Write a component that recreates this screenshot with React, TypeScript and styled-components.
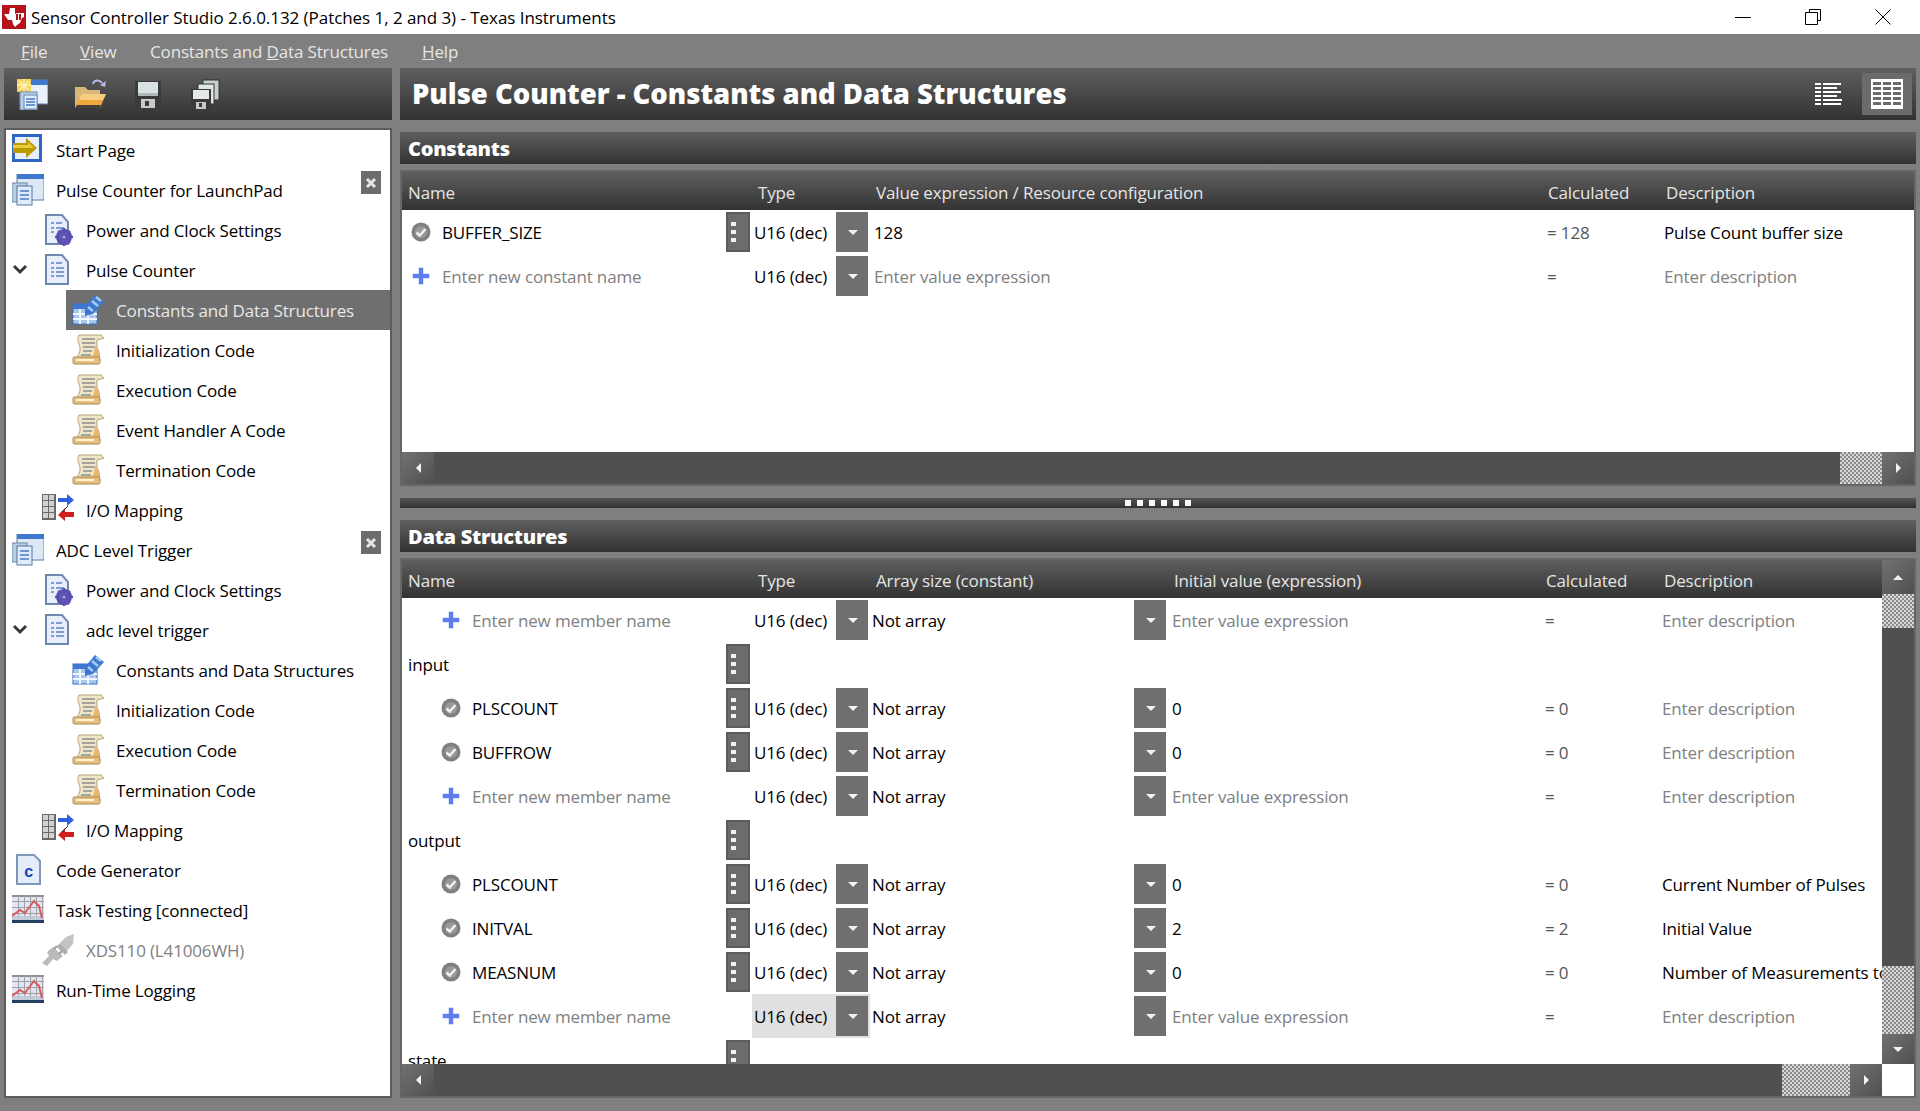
import type { ReactNode } from "react";
import styled, { createGlobalStyle } from "styled-components";

const GlobalStyle = createGlobalStyle`
  html, body { margin: 0; padding: 0; background: #7f7f7f; }
  * { box-sizing: border-box; }
  body { font-family: "Open Sans", "Noto Sans", sans-serif; overflow: hidden; }
`;

const FONT_SIZE = "17px";
const TRACKING = "-0.15px";
const HEAD_GRADIENT = "linear-gradient(#5f5f5f, #323232)";
const CHECKER = `repeating-conic-gradient(#d8d8d8 0 25%, #8a8a8a 0 50%) 0 0 / 4px 4px`;

const Shell = styled.div`
  width: 1920px;
  height: 1111px;
  display: flex;
  flex-direction: column;
  background: #7f7f7f;
  overflow: hidden;
`;

const TitleBar = styled.div`
  height: 34px;
  background: #fff;
  display: flex;
  align-items: center;
  padding-left: 2px;
  color: #000;
  font-size: 17px;
  letter-spacing: -0.05px;
  flex: none;
`;

const TitleText = styled.span`
  margin-left: 5px;
`;

const WindowControls = styled.div`
  margin-left: auto;
  display: flex;
  align-items: center;
  margin-right: 2px;
`;

const WindowButton = styled.div`
  width: 70px;
  height: 34px;
  display: flex;
  align-items: center;
  justify-content: center;
`;

const MenuBar = styled.div`
  height: 34px;
  flex: none;
  display: flex;
  align-items: center;
  padding-left: 21px;
  color: #e6e6e6;
  font-size: ${FONT_SIZE};
  letter-spacing: ${TRACKING};
`;

const MenuItem = styled.span<{ $width: number }>`
  width: ${(p) => p.$width}px;
  white-space: nowrap;
`;

const Body = styled.div`
  flex: 1;
  min-height: 0;
  display: flex;
  gap: 8px;
  padding: 0 4px 13px;
`;

const Sidebar = styled.div`
  width: 388px;
  display: flex;
  flex-direction: column;
  gap: 8px;
`;

const Toolbar = styled.div`
  height: 52px;
  flex: none;
  background: ${HEAD_GRADIENT};
  display: flex;
  align-items: center;
`;

const ToolButton = styled.div<{ $width: number }>`
  width: ${(p) => p.$width}px;
  padding-left: 12px;
  display: flex;
  align-items: center;
`;

const Tree = styled.div`
  flex: 1;
  border: 2px solid #5c5c5c;
  background: #fff;
  overflow: hidden;
`;

const TreeRow = styled.div`
  height: 40px;
  display: flex;
`;

const Gutter = styled.div<{ $width: number }>`
  width: ${(p) => p.$width}px;
  flex: none;
  display: flex;
  align-items: center;
`;

const ChevronSlot = styled.span`
  margin-left: 6px;
  display: flex;
`;

const TreeBody = styled.div<{ $selected?: boolean; $muted?: boolean }>`
  flex: 1;
  display: flex;
  align-items: center;
  padding-left: 6px;
  gap: 12px;
  font-size: ${FONT_SIZE};
  letter-spacing: ${TRACKING};
  white-space: nowrap;
  background: ${(p) => (p.$selected ? "#6f6f6f" : "transparent")};
  color: ${(p) => (p.$selected ? "#e8e8e8" : p.$muted ? "#808080" : "#000")};
`;

const CloseBox = styled.div`
  width: 20px;
  height: 23px;
  margin: 1px 9px 0 auto;
  align-self: flex-start;
  background: #6c6c6c;
  display: flex;
  align-items: center;
  justify-content: center;
`;

const Main = styled.div`
  flex: 1;
  min-width: 0;
  display: flex;
  flex-direction: column;
`;

const PageHeader = styled.div`
  height: 52px;
  flex: none;
  background: ${HEAD_GRADIENT};
  display: flex;
  align-items: center;
  padding-left: 12px;
  color: #fff;
  font-size: 27.5px;
  font-weight: 800;
  letter-spacing: -0.02px;
`;

const HeadingText = styled.span`
  margin-top: -2px;
`;

const ViewSwitch = styled.div`
  margin-left: auto;
  display: flex;
  align-items: center;
  padding-right: 4px;
`;

const ViewButton = styled.div<{ $active?: boolean }>`
  width: 50px;
  height: 42px;
  margin-left: 11px;
  display: flex;
  align-items: center;
  justify-content: center;
  background: ${(p) => (p.$active ? "#6b6b6b" : "transparent")};
`;

const SectionHeader = styled.div<{ $top: number }>`
  height: 32px;
  flex: none;
  margin-top: ${(p) => p.$top}px;
  background: ${HEAD_GRADIENT};
  display: flex;
  align-items: center;
  padding-left: 8px;
  padding-top: 1px;
  color: #fff;
  font-size: 20px;
  font-weight: 800;
  letter-spacing: -0.25px;
`;

const Panel = styled.div<{ $height?: number }>`
  margin-top: 6px;
  border: 2px solid #666;
  background: #fff;
  display: flex;
  flex-direction: column;
  overflow: hidden;
  ${(p) => (p.$height ? `height: ${p.$height}px; flex: none;` : "flex: 1; min-height: 0;")}
`;

const Splitter = styled.div`
  height: 10px;
  flex: none;
  margin: 12px 0;
  background: linear-gradient(#555, #303030);
  display: flex;
  justify-content: center;
  align-items: center;
  gap: 6px;
`;

const SplitDot = styled.span`
  width: 6px;
  height: 6px;
  background: #f8f8f8;
`;

const PanelMiddle = styled.div`
  flex: 1;
  min-height: 0;
  display: flex;
`;

const TableArea = styled.div`
  flex: 1;
  min-width: 0;
  display: flex;
  flex-direction: column;
  overflow: hidden;
`;

const HeaderRow = styled.div<{ $cols: string }>`
  height: 38px;
  flex: none;
  display: grid;
  grid-template-columns: ${(p) => p.$cols};
  align-items: center;
  padding-top: 2px;
  background: ${HEAD_GRADIENT};
  color: #e6e6e6;
  font-size: ${FONT_SIZE};
  letter-spacing: ${TRACKING};
  white-space: nowrap;
`;

const HeaderCell = styled.div<{ $col: number; $pad?: number }>`
  grid-column: ${(p) => p.$col};
  padding-left: ${(p) => p.$pad ?? 0}px;
`;

const Rows = styled.div`
  flex: 1;
  min-height: 0;
  overflow: hidden;
  padding-top: 2px;
  display: flex;
  flex-direction: column;
  gap: 4px;
`;

const Row = styled.div<{ $cols: string }>`
  height: 40px;
  flex: none;
  display: grid;
  grid-template-columns: ${(p) => p.$cols};
  align-items: center;
  font-size: ${FONT_SIZE};
  letter-spacing: ${TRACKING};
  white-space: nowrap;
  color: #000;
`;

const NameCell = styled.div<{ $indent: number; $ghost?: boolean }>`
  display: flex;
  align-items: center;
  padding-left: ${(p) => p.$indent}px;
  gap: 11px;
  color: ${(p) => (p.$ghost ? "#808080" : "#000")};
`;

const StatusSlot = styled.span`
  width: 20px;
  height: 20px;
  display: flex;
  align-items: center;
  justify-content: center;
`;

const GroupName = styled.div`
  padding-left: 6px;
`;

const Grip = styled.div`
  width: 24px;
  height: 40px;
  background: #6c6c6c;
  border: 2px solid #5c5c5c;
  display: flex;
  flex-direction: column;
  align-items: center;
  justify-content: center;
  gap: 4px;
  padding-right: 10px;
`;

const GripDot = styled.span`
  width: 5px;
  height: 4px;
  background: #f2f2f2;
`;

const TypeGroup = styled.div<{ $focused?: boolean }>`
  grid-column: 3 / span 2;
  display: flex;
  align-items: center;
  margin: -2px -2px -2px 2px;
  padding: 2px;
  background: ${(p) => (p.$focused ? "#e0e0e0" : "transparent")};
`;

const TypeText = styled.span`
  width: 82px;
`;

const DropButton = styled.div`
  width: 32px;
  height: 40px;
  padding-left: 1px;
  background: #6f6f6f;
  display: flex;
  align-items: center;
  justify-content: center;
`;

const Arrow = styled.span<{ $dir: "up" | "down" | "left" | "right" }>`
  width: 0;
  height: 0;
  border-style: solid;
  border-color: transparent;
  ${(p) =>
    p.$dir === "down"
      ? "border-width: 5px 5px 0; border-top-color: #f2f2f2;"
      : p.$dir === "up"
        ? "border-width: 0 5px 5px; border-bottom-color: #f2f2f2;"
        : p.$dir === "left"
          ? "border-width: 5px 5px 5px 0; border-right-color: #f2f2f2;"
          : "border-width: 5px 0 5px 5px; border-left-color: #f2f2f2;"}
`;

const Cell = styled.div<{ $pad?: number; $tone?: "ghost" | "calc" }>`
  padding-left: ${(p) => p.$pad ?? 0}px;
  overflow: hidden;
  color: ${(p) => (p.$tone === "ghost" ? "#808080" : p.$tone === "calc" ? "#555" : "#000")};
`;

const HScroll = styled.div`
  height: 32px;
  flex: none;
  display: flex;
  background: #505050;
`;

const ScrollButton = styled.div<{ $h?: number }>`
  width: 32px;
  height: ${(p) => p.$h ?? 32}px;
  flex: none;
  background: linear-gradient(135deg, #717171, #505050);
  display: flex;
  align-items: center;
  justify-content: center;
`;

const HThumb = styled.div<{ $width: number }>`
  width: ${(p) => p.$width}px;
  margin-left: auto;
  background: ${CHECKER};
`;

const Corner = styled.div`
  width: 32px;
  background: #fff;
`;

const VScroll = styled.div`
  width: 32px;
  flex: none;
  background: #505050;
  display: flex;
  flex-direction: column;
`;

const VThumb = styled.div<{ $height: number; $auto?: boolean }>`
  height: ${(p) => p.$height}px;
  flex: none;
  margin-top: ${(p) => (p.$auto ? "auto" : "0")};
  background: ${CHECKER};
`;

function Svg({ w = 32, h = 32, children }: { w?: number; h?: number; children: ReactNode }) {
  return (
    <svg width={w} height={h} viewBox={`0 0 ${w} ${h}`} style={{ flex: "none", display: "block" }}>
      {children}
    </svg>
  );
}

const TiLogo = () => (
  <Svg w={24} h={24}>
    <rect width="24" height="24" fill="#b5121b" />
    <path d="M8 3h5v6l2-1h7v4l-2 1-2 5-3 2-2 2-2-3-1-4H6L2 9h5z" fill="#fff" />
    <path d="M14 9h2v6h-2zM17 6h2v2h-2zM17 9h2v6h-2z" fill="#b5121b" />
  </Svg>
);

const NewProjectIcon = () => (
  <Svg>
    <rect x="4" y="2" width="28" height="24" fill="#e8f0fa" stroke="#5f7fae" />
    <rect x="4" y="2" width="28" height="5" fill="#3f79cf" />
    <rect x="1" y="1" width="14" height="13" fill="#f2d25c" />
    <path d="M8 1v13M1 7h14M3 3l10 9M13 3L3 12" stroke="#fff3b0" strokeWidth="1.4" />
    <rect x="4" y="14" width="17" height="18" fill="#b9cee9" stroke="#6d88ad" />
    <rect x="8" y="17" width="13" height="14" fill="#dfeafa" stroke="#6d88ad" />
    <path d="M10 21h9M10 24h9M10 27h9" stroke="#4a78c4" strokeWidth="1.5" />
  </Svg>
);

const OpenIcon = () => (
  <Svg>
    <path d="M19 6c1-4 6-5 9-1" fill="none" stroke="#b9b9e8" strokeWidth="2" />
    <path d="M32 3l-1 6-5-2z" fill="#b9b9e8" />
    <path d="M1 9h10l3 3h12v6H8L2 30H1z" fill="#d9b779" />
    <path d="M8 16h24l-6 14H1z" fill="#f0a83c" />
    <path d="M8 16h24l-3 6H5z" fill="#f7cd82" />
    <path d="M1 30h25l1-3H3z" fill="#45413a" />
  </Svg>
);

const SaveIcon = () => (
  <Svg w={28} h={28}>
    <rect x="1" y="1" width="26" height="27" fill="#3a3a3a" />
    <rect x="4" y="2" width="20" height="14" fill="#d9e2e2" />
    <rect x="4" y="13" width="20" height="3" fill="#aeb9b9" />
    <rect x="7" y="19" width="14" height="9" fill="#c8c8c8" />
    <rect x="11" y="21" width="4" height="5" fill="#3a3a3a" />
  </Svg>
);

const SaveAllIcon = () => (
  <Svg w={30} h={30}>
    <rect x="13" y="1" width="16" height="20" fill="#c8d0d0" stroke="#333" />
    <rect x="8" y="5" width="16" height="20" fill="#dfe6e6" stroke="#333" />
    <rect x="1" y="10" width="20" height="20" fill="#3a3a3a" />
    <rect x="3" y="11" width="16" height="9" fill="#e4eaea" />
    <rect x="6" y="23" width="10" height="7" fill="#c8c8c8" />
    <rect x="9" y="24" width="3" height="4" fill="#3a3a3a" />
  </Svg>
);

const ListViewIcon = () => (
  <Svg w={32} h={24}>
    {[2, 6, 10, 14, 18, 22].map((y, i) => (
      <g key={y} fill="#fff">
        <rect x="5" y={y - 1} width="6" height="2" />
        <rect x="13" y={y - 1} width={[18, 14, 18, 14, 19, 18][i]} height="2" />
      </g>
    ))}
  </Svg>
);

const TableViewIcon = () => (
  <Svg w={32} h={30}>
    <rect width="32" height="30" fill="#fff" />
    {[2, 7, 12, 17, 22].map((y) =>
      [2, 12, 22].map((x) => <rect key={`${x}-${y}`} x={x} y={y + 1} width="8" height="3" fill="#6b6b6b" />),
    )}
  </Svg>
);

const StartIcon = () => (
  <Svg>
    <rect x="0" y="0" width="30" height="28" fill="#2f66c4" />
    <rect x="3" y="3" width="24" height="22" fill="#e8eefa" />
    <path d="M1 9h13V4l11 10-11 10v-5H1z" fill="#b99a00" />
    <path d="M1 11h15V8l6 6H1z" fill="#e8cd3c" />
  </Svg>
);

const ProjectIcon = () => (
  <Svg>
    <rect x="5" y="0" width="27" height="26" fill="#dde8f7" stroke="#5f7fae" />
    <rect x="5" y="0" width="27" height="5" fill="#3f79cf" />
    <rect x="0" y="9" width="15" height="19" fill="#b9cee9" stroke="#6d88ad" />
    <rect x="5" y="12" width="15" height="19" fill="#dfeafa" stroke="#5a7498" />
    <path d="M8 17h9M8 21h9M8 25h9" stroke="#4a78c4" strokeWidth="1.5" />
  </Svg>
);

const DocIcon = () => (
  <Svg>
    <path d="M4 1h16l6 7v22H4z" fill="#e8effa" stroke="#6d88ad" strokeWidth="2" />
    <path d="M9 9h3M14 9h6M9 14h3M14 14h8M9 18h3M14 18h8M9 22h3M14 22h8" stroke="#5b82c8" strokeWidth="1.6" />
  </Svg>
);

const DocGearIcon = () => (
  <Svg>
    <path d="M4 1h16l6 7v22H4z" fill="#e8effa" stroke="#6d88ad" strokeWidth="2" />
    <path d="M9 9h3M14 9h6M9 14h3M14 14h8M9 18h3" stroke="#5b82c8" strokeWidth="1.6" />
    <circle cx="22" cy="23" r="6" fill="none" stroke="#5a4fb0" strokeWidth="4" />
    <path d="M22 14v18M13 23h18M16 17l12 12M28 17L16 29" stroke="#5a4fb0" strokeWidth="2.6" />
    <circle cx="22" cy="23" r="1.6" fill="#a9a4dc" />
  </Svg>
);

const ConstantsIcon = () => (
  <Svg>
    <rect x="1" y="10" width="24" height="20" fill="#a8c8ef" stroke="#3a70c0" />
    <rect x="1" y="10" width="24" height="5" fill="#3f79cf" />
    <path d="M8 15v15M16 15v15M1 20h24M1 25h24" stroke="#f2f7ff" strokeWidth="2" />
    <path d="M13 13L23 1l9 7-11 12-8 2z" fill="#3f79cf" />
    <path d="M20 7l6 5M24 3l5 4M16 13l5 4" stroke="#a9ccf6" strokeWidth="2.4" />
  </Svg>
);

const ScrollIcon = () => (
  <Svg>
    <path d="M7 1h22l3 3-7 2v8c2 3 3 6 2 10H4c4-4 5-9 3-14C6 7 5 4 7 1z" fill="#efe6c9" stroke="#b9a273" />
    <path d="M10 5h13M10 9h13M11 13h12M11 17h9M9 21h10" stroke="#a8a49a" strokeWidth="1.8" />
    <path d="M23 12c3 3 5 8 4 14h-9c3-4 5-9 5-14z" fill="#efb765" />
    <rect x="1" y="23" width="27" height="7" rx="1.5" fill="#e6be80" stroke="#a8864f" />
    <rect x="4" y="25" width="18" height="2" fill="#fff2d5" />
  </Svg>
);

const MappingIcon = () => (
  <Svg>
    <rect x="0" y="0" width="14" height="26" fill="#6a6a6a" />
    {[1, 7, 13, 19].map((y) =>
      [1, 7].map((x) => <rect key={`${x}-${y}`} x={x} y={y} width="5" height="5" fill="#d2d2d2" />),
    )}
    <path d="M16 4h9V0l7 6-7 6V8h-9z" fill="#2f5fe0" />
    <path d="M32 18h-9v-4l-7 7 7 6v-4h9z" fill="#d01f1f" />
    <path d="M26 12l-6 6" stroke="#333" strokeWidth="1" />
  </Svg>
);

const CodeIcon = () => (
  <Svg>
    <path d="M5 1h17l6 6v23H5z" fill="#e6edfa" stroke="#7f97b8" strokeWidth="2" />
    <text x="12" y="23" fontFamily="'Liberation Mono', monospace" fontWeight="700" fontSize="16" fill="#1446b0">
      c
    </text>
  </Svg>
);

const ChartIcon = () => (
  <Svg>
    <rect x="0" y="1" width="32" height="25" fill="#e2e6f2" />
    <rect x="0" y="1" width="32" height="2" fill="#8f8f8f" />
    {[7, 13, 19].map((y) => (
      <rect key={y} x="0" y={y} width="32" height="1" fill="#a0a0a8" />
    ))}
    {[6, 12, 18, 24, 30].map((x) => (
      <rect key={x} x={x} y="1" width="1" height="25" fill="#a0a0a8" />
    ))}
    <rect x="0" y="22" width="32" height="4" fill="#c3cad8" />
    <path d="M0 22l8-6 5 3 9-12 5 5 3 12" fill="none" stroke="#d9595f" strokeWidth="2" />
    <rect x="0" y="26" width="32" height="3" fill="#24405f" />
  </Svg>
);

const PlugIcon = () => (
  <Svg>
    <path d="M15 12l9-9 8-3-1 10-8 9z" fill="#c4c4c4" />
    <path d="M18 10l8 8-3 3-8-8z" fill="#adadad" />
    <path d="M0 29l7-7-2-4 6-5 10 9-6 5-4-2-6 7z" fill="#bababa" />
    <path d="M12 15l3-3M17 20l3-3" stroke="#9d9d9d" strokeWidth="2" />
  </Svg>
);

const Chevron = () => (
  <Svg w={16} h={12}>
    <path d="M2 2l6 6 6-6" fill="none" stroke="#3a3a3a" strokeWidth="3" />
  </Svg>
);

const CheckIcon = () => (
  <Svg w={20} h={20}>
    <circle cx="10" cy="10" r="9.5" fill="#808080" />
    <circle cx="10" cy="10" r="6" fill="#999" />
    <path d="M5.5 10.5l3.2 3 5.8-6.5" fill="none" stroke="#f0f0f0" strokeWidth="2.6" />
  </Svg>
);

const PlusIcon = () => (
  <Svg w={18} h={18}>
    <rect x="6.5" y="0.5" width="5" height="17" fill="#b7c6f7" />
    <rect x="0.5" y="6.5" width="17" height="5" fill="#b7c6f7" />
    <rect x="7" y="1" width="4" height="16" fill="#5f7df0" />
    <rect x="1" y="7" width="16" height="4" fill="#5f7df0" />
  </Svg>
);

const ICONS: Record<string, () => ReactNode> = {
  start: StartIcon,
  project: ProjectIcon,
  doc: DocIcon,
  gear: DocGearIcon,
  constants: ConstantsIcon,
  scroll: ScrollIcon,
  mapping: MappingIcon,
  code: CodeIcon,
  chart: ChartIcon,
  plug: PlugIcon,
};

interface TreeEntry {
  label: string;
  icon: string;
  level: number;
  open?: boolean;
  selected?: boolean;
  closable?: boolean;
  muted?: boolean;
}

const TREE: TreeEntry[] = [
  { label: "Start Page", icon: "start", level: 0 },
  { label: "Pulse Counter for LaunchPad", icon: "project", level: 0, closable: true },
  { label: "Power and Clock Settings", icon: "gear", level: 1 },
  { label: "Pulse Counter", icon: "doc", level: 1, open: true },
  { label: "Constants and Data Structures", icon: "constants", level: 2, selected: true },
  { label: "Initialization Code", icon: "scroll", level: 2 },
  { label: "Execution Code", icon: "scroll", level: 2 },
  { label: "Event Handler A Code", icon: "scroll", level: 2 },
  { label: "Termination Code", icon: "scroll", level: 2 },
  { label: "I/O Mapping", icon: "mapping", level: 1 },
  { label: "ADC Level Trigger", icon: "project", level: 0, closable: true },
  { label: "Power and Clock Settings", icon: "gear", level: 1 },
  { label: "adc level trigger", icon: "doc", level: 1, open: true },
  { label: "Constants and Data Structures", icon: "constants", level: 2 },
  { label: "Initialization Code", icon: "scroll", level: 2 },
  { label: "Execution Code", icon: "scroll", level: 2 },
  { label: "Termination Code", icon: "scroll", level: 2 },
  { label: "I/O Mapping", icon: "mapping", level: 1 },
  { label: "Code Generator", icon: "code", level: 0 },
  { label: "Task Testing [connected]", icon: "chart", level: 0 },
  { label: "XDS110 (L41006WH)", icon: "plug", level: 1, muted: true },
  { label: "Run-Time Logging", icon: "chart", level: 0 },
];

const CONST_COLS = "324px 24px 86px 32px 679px 117px 1fr";
const DATA_COLS = "324px 24px 86px 32px 266px 32px 379px 117px 1fr";

interface Member {
  group?: string;
  name?: string;
  value?: string;
  calc?: string;
  desc?: string;
  focused?: boolean;
}

const MEMBERS: Member[] = [
  {},
  { group: "input" },
  { name: "PLSCOUNT", value: "0", calc: "= 0" },
  { name: "BUFFROW", value: "0", calc: "= 0" },
  {},
  { group: "output" },
  { name: "PLSCOUNT", value: "0", calc: "= 0", desc: "Current Number of Pulses" },
  { name: "INITVAL", value: "2", calc: "= 2", desc: "Initial Value" },
  { name: "MEASNUM", value: "0", calc: "= 0", desc: "Number of Measurements to take" },
  { focused: true },
  { group: "state" },
];

const GripButton = () => (
  <Grip>
    <GripDot />
    <GripDot />
    <GripDot />
  </Grip>
);

const Dropdown = () => (
  <DropButton>
    <Arrow $dir="down" />
  </DropButton>
);

function TypeCell({ focused }: { focused?: boolean }) {
  return (
    <TypeGroup $focused={focused}>
      <TypeText>U16 (dec)</TypeText>
      <Dropdown />
    </TypeGroup>
  );
}

function MemberRow({ member }: { member: Member }) {
  if (member.group) {
    return (
      <Row $cols={DATA_COLS}>
        <GroupName>{member.group}</GroupName>
        <GripButton />
      </Row>
    );
  }
  const isNew = !member.name;
  return (
    <Row $cols={DATA_COLS}>
      <NameCell $indent={39} $ghost={isNew}>
        <StatusSlot>{isNew ? <PlusIcon /> : <CheckIcon />}</StatusSlot>
        {member.name ?? "Enter new member name"}
      </NameCell>
      {isNew ? <span /> : <GripButton />}
      <TypeCell focused={member.focused} />
      <Cell $pad={4}>Not array</Cell>
      <Dropdown />
      <Cell $pad={6} $tone={isNew ? "ghost" : undefined}>
        {member.value ?? "Enter value expression"}
      </Cell>
      <Cell $tone="calc">{member.calc ?? "="}</Cell>
      <Cell $tone={member.desc ? undefined : "ghost"}>{member.desc ?? "Enter description"}</Cell>
    </Row>
  );
}

export default function App() {
  return (
    <Shell>
      <GlobalStyle />
      <TitleBar>
        <TiLogo />
        <TitleText>Sensor Controller Studio 2.6.0.132 (Patches 1, 2 and 3) - Texas Instruments</TitleText>
        <WindowControls>
          <WindowButton>
            <Svg w={16} h={16}>
              <path d="M0 8.5h16" stroke="#000" />
            </Svg>
          </WindowButton>
          <WindowButton>
            <Svg w={16} h={16}>
              <path d="M4.5 3V.5h11v11H13M.5 3.5h12v12H.5z" fill="none" stroke="#000" />
            </Svg>
          </WindowButton>
          <WindowButton>
            <Svg w={16} h={16}>
              <path d="M.5.5l15 15M15.5.5l-15 15" stroke="#000" />
            </Svg>
          </WindowButton>
        </WindowControls>
      </TitleBar>
      <MenuBar>
        <MenuItem $width={59}>
          <u>F</u>ile
        </MenuItem>
        <MenuItem $width={70}>
          <u>V</u>iew
        </MenuItem>
        <MenuItem $width={272}>
          Constants and <u>D</u>ata Structures
        </MenuItem>
        <MenuItem $width={50}>
          <u>H</u>elp
        </MenuItem>
      </MenuBar>
      <Body>
        <Sidebar>
          <Toolbar>
            <ToolButton $width={58}>
              <NewProjectIcon />
            </ToolButton>
            <ToolButton $width={60}>
              <OpenIcon />
            </ToolButton>
            <ToolButton $width={56}>
              <SaveIcon />
            </ToolButton>
            <ToolButton $width={50}>
              <SaveAllIcon />
            </ToolButton>
          </Toolbar>
          <Tree>
            {TREE.map((entry, i) => {
              const Icon = ICONS[entry.icon];
              return (
                <TreeRow key={i}>
                  <Gutter $width={entry.level * 30}>
                    {entry.open && (
                      <ChevronSlot>
                        <Chevron />
                      </ChevronSlot>
                    )}
                  </Gutter>
                  <TreeBody $selected={entry.selected} $muted={entry.muted}>
                    <Icon />
                    {entry.label}
                    {entry.closable && (
                      <CloseBox>
                        <Svg w={12} h={12}>
                          <path d="M2 2l8 8M10 2l-8 8" stroke="#e6e6e6" strokeWidth="3" />
                        </Svg>
                      </CloseBox>
                    )}
                  </TreeBody>
                </TreeRow>
              );
            })}
          </Tree>
        </Sidebar>
        <Main>
          <PageHeader>
            <HeadingText>Pulse Counter - Constants and Data Structures</HeadingText>
            <ViewSwitch>
              <ViewButton>
                <ListViewIcon />
              </ViewButton>
              <ViewButton $active>
                <TableViewIcon />
              </ViewButton>
            </ViewSwitch>
          </PageHeader>
          <SectionHeader $top={12}>Constants</SectionHeader>
          <Panel $height={316}>
            <TableArea>
              <HeaderRow $cols={CONST_COLS}>
                <HeaderCell $col={1} $pad={6}>
                  Name
                </HeaderCell>
                <HeaderCell $col={3} $pad={8}>
                  Type
                </HeaderCell>
                <HeaderCell $col={5} $pad={8}>
                  Value expression / Resource configuration
                </HeaderCell>
                <HeaderCell $col={6} $pad={1}>
                  Calculated
                </HeaderCell>
                <HeaderCell $col={7} $pad={2}>
                  Description
                </HeaderCell>
              </HeaderRow>
              <Rows>
                <Row $cols={CONST_COLS}>
                  <NameCell $indent={9} $ghost={false}>
                    <StatusSlot>
                      <CheckIcon />
                    </StatusSlot>
                    BUFFER_SIZE
                  </NameCell>
                  <GripButton />
                  <TypeCell />
                  <Cell $pad={6}>128</Cell>
                  <Cell $tone="calc">= 128</Cell>
                  <Cell>Pulse Count buffer size</Cell>
                </Row>
                <Row $cols={CONST_COLS}>
                  <NameCell $indent={9} $ghost>
                    <StatusSlot>
                      <PlusIcon />
                    </StatusSlot>
                    Enter new constant name
                  </NameCell>
                  <span />
                  <TypeCell />
                  <Cell $pad={6} $tone="ghost">
                    Enter value expression
                  </Cell>
                  <Cell $tone="calc">=</Cell>
                  <Cell $tone="ghost">Enter description</Cell>
                </Row>
              </Rows>
            </TableArea>
            <HScroll>
              <ScrollButton>
                <Arrow $dir="left" />
              </ScrollButton>
              <HThumb $width={42} />
              <ScrollButton>
                <Arrow $dir="right" />
              </ScrollButton>
            </HScroll>
          </Panel>
          <Splitter>
            {[0, 1, 2, 3, 4, 5].map((d) => (
              <SplitDot key={d} />
            ))}
          </Splitter>
          <SectionHeader $top={0}>Data Structures</SectionHeader>
          <Panel>
            <PanelMiddle>
              <TableArea>
                <HeaderRow $cols={DATA_COLS}>
                  <HeaderCell $col={1} $pad={6}>
                    Name
                  </HeaderCell>
                  <HeaderCell $col={3} $pad={8}>
                    Type
                  </HeaderCell>
                  <HeaderCell $col={5} $pad={8}>
                    Array size (constant)
                  </HeaderCell>
                  <HeaderCell $col={7} $pad={8}>
                    Initial value (expression)
                  </HeaderCell>
                  <HeaderCell $col={8} $pad={1}>
                    Calculated
                  </HeaderCell>
                  <HeaderCell $col={9} $pad={2}>
                    Description
                  </HeaderCell>
                </HeaderRow>
                <Rows>
                  {MEMBERS.map((member, i) => (
                    <MemberRow key={i} member={member} />
                  ))}
                </Rows>
              </TableArea>
              <VScroll>
                <ScrollButton $h={34}>
                  <Arrow $dir="up" />
                </ScrollButton>
                <VThumb $height={34} />
                <VThumb $height={68} $auto />
                <ScrollButton $h={30}>
                  <Arrow $dir="down" />
                </ScrollButton>
              </VScroll>
            </PanelMiddle>
            <HScroll>
              <ScrollButton>
                <Arrow $dir="left" />
              </ScrollButton>
              <HThumb $width={68} />
              <ScrollButton>
                <Arrow $dir="right" />
              </ScrollButton>
              <Corner />
            </HScroll>
          </Panel>
        </Main>
      </Body>
    </Shell>
  );
}
